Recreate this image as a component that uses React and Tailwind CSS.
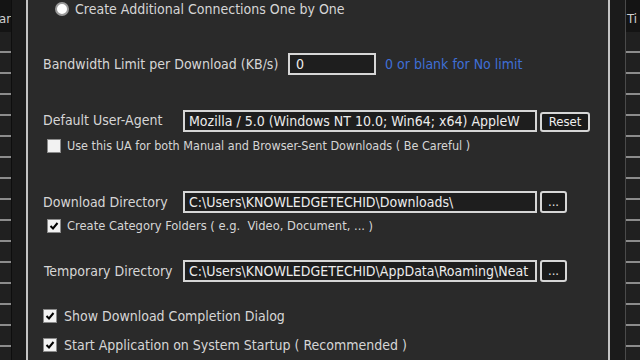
import React from "react";

const font = { fontFamily: "'DejaVu Sans Condensed', 'DejaVu Sans', sans-serif" };

function TableCol({ label, align }) {
  const rows = Array.from({ length: 16 });
  return (
    <div className="w-full h-full flex flex-col bg-[#202020]">
      <div className={`h-[32px] shrink-0 bg-[#141414] flex items-center pt-[6px] overflow-hidden text-[13px] text-[#cfcfcf] ${align}`}>
        <span className="whitespace-nowrap">{label}</span>
      </div>
      {rows.map((_, i) => (
        <div key={i} className="h-[21px] shrink-0 border-b-2 border-[#8c8c8c]" />
      ))}
    </div>
  );
}

function Check({ checked }) {
  return (
    <div className="w-[14px] h-[14px] shrink-0 bg-[#f2f2f2] border border-[#8a8a8a] flex items-center justify-center">
      {checked && (
        <svg width="10" height="10" viewBox="0 0 10 10">
          <path d="M1.5 5 L4 7.5 L8.5 2" fill="none" stroke="#000" strokeWidth="2" />
        </svg>
      )}
    </div>
  );
}

function Field({ text }) {
  return (
    <div className="w-[354px] h-[22px] shrink-0 border-2 border-[#d6d6d6] bg-[#1e1e1e] flex items-center pl-[4px] overflow-hidden">
      <span className="whitespace-nowrap text-[14px] text-[#ececec]">{text}</span>
    </div>
  );
}

function Dots() {
  return (
    <div className="ml-[3px] w-[27px] h-[22px] shrink-0 border-2 border-[#d6d6d6] rounded-[3px] bg-[#1a1a1a] flex items-end justify-center text-[13px] text-[#e2e2e2] leading-none pb-[3px]">
      ...
    </div>
  );
}

export default function App() {
  return (
    <div className="w-[640px] h-[360px] overflow-hidden flex bg-[#2a2a2a]" style={font}>
      {/* left strip */}
      <div className="w-[11px] shrink-0">
        <TableCol label="ar" align="justify-end" />
      </div>
      <div className="w-[1px] shrink-0 bg-[#0e0e0e]" />
      <div className="w-[14px] shrink-0 bg-[#1b1b1b]" />
      <div className="w-[2px] shrink-0 bg-[#c4c4c4]" />

      {/* dialog */}
      <div className="flex-1 flex flex-col pl-[15px] text-[#d6d6d6] text-[14px]">
        <div className="h-[18px] flex items-center ml-[12px] gap-[6px]">
          <div className="w-[14px] h-[14px] rounded-full bg-white border-2 border-[#9a9a9a]" />
          <span className="whitespace-nowrap">Create Additional Connections One by One</span>
        </div>

        <div className="mt-[35px] h-[22px] flex items-center">
          <span className="w-[245px] shrink-0 whitespace-nowrap">Bandwidth Limit per Download (KB/s)</span>
          <div className="w-[88px] h-[22px] border-2 border-[#d6d6d6] bg-[#1e1e1e] flex items-center pl-[6px] text-[#ececec]">0</div>
          <span className="ml-[9px] text-[#3f6fd6] whitespace-nowrap">0 or blank for No limit</span>
        </div>

        <div className="mt-[34px] h-[23px] flex items-end">
          <span className="w-[140px] shrink-0 self-center whitespace-nowrap">Default User-Agent</span>
          <Field text="Mozilla / 5.0 (Windows NT 10.0; Win64; x64) AppleW" />
          <div className="ml-[3px] w-[50px] h-[20px] border-2 border-[#d6d6d6] rounded-[3px] bg-[#1a1a1a] flex items-center justify-center text-[13px] text-[#efefef]">
            Reset
          </div>
        </div>

        <div className="mt-[6px] h-[16px] flex items-center ml-[4px] gap-[6px] text-[12.5px]">
          <Check checked={false} />
          <span className="whitespace-nowrap">Use this UA for both Manual and Browser-Sent Downloads ( Be Careful )</span>
        </div>

        <div className="mt-[37px] h-[22px] flex items-center">
          <span className="w-[140px] shrink-0 whitespace-nowrap">Download Directory</span>
          <Field text="C:\Users\KNOWLEDGETECHID\Downloads\" />
          <Dots />
        </div>

        <div className="mt-[5px] h-[16px] flex items-center ml-[4px] gap-[6px] text-[12.8px]">
          <Check checked />
          <span className="whitespace-nowrap">Create Category Folders ( e.g.&nbsp; Video, Document, ... )</span>
        </div>

        <div className="mt-[26px] h-[22px] flex items-center">
          <span className="w-[140px] shrink-0 whitespace-nowrap pl-[1px]">Temporary Directory</span>
          <Field text="C:\Users\KNOWLEDGETECHID\AppData\Roaming\Neat" />
          <Dots />
        </div>

        <div className="mt-[26px] h-[16px] flex items-center gap-[7px]">
          <Check checked />
          <span className="whitespace-nowrap">Show Download Completion Dialog</span>
        </div>

        <div className="mt-[13px] h-[16px] flex items-center gap-[7px]">
          <Check checked />
          <span className="whitespace-nowrap">Start Application on System Startup ( Recommended )</span>
        </div>
      </div>

      {/* right strip */}
      <div className="w-[2px] shrink-0 bg-[#c4c4c4]" />
      <div className="w-[15px] shrink-0 bg-[#1b1b1b]" />
      <div className="w-[1px] shrink-0 bg-[#4a4a4a]" />
      <div className="w-[14px] shrink-0">
        <TableCol label="Ti" align="justify-start pl-[1px]" />
      </div>
    </div>
  );
}
